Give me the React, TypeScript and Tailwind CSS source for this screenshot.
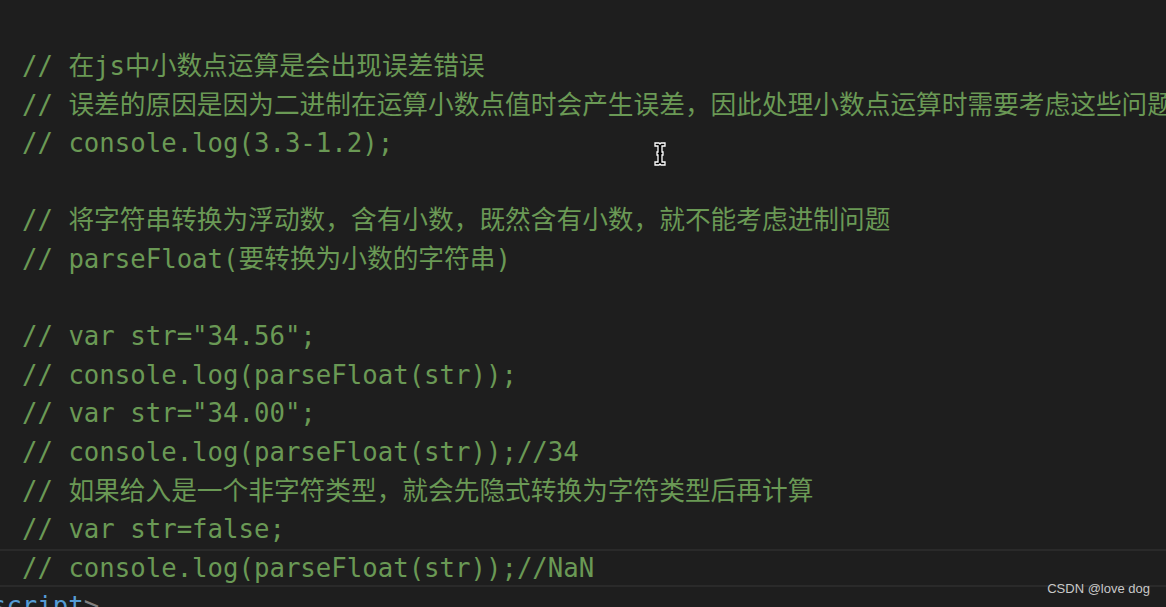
import React from "react";

const lines: string[] = [
  "// 在js中小数点运算是会出现误差错误",
  "// 误差的原因是因为二进制在运算小数点值时会产生误差，因此处理小数点运算时需要考虑这些问题",
  "// console.log(3.3-1.2);",
  "",
  "// 将字符串转换为浮动数，含有小数，既然含有小数，就不能考虑进制问题",
  "// parseFloat(要转换为小数的字符串)",
  "",
  "// var str=\"34.56\";",
  "// console.log(parseFloat(str));",
  "// var str=\"34.00\";",
  "// console.log(parseFloat(str));//34",
  "// 如果给入是一个非字符类型，就会先隐式转换为字符类型后再计算",
  "// var str=false;",
  "// console.log(parseFloat(str));//NaN",
];

export default function App() {
  return (
    <div className="relative w-[1166px] h-[607px] overflow-hidden bg-[#1e1e1e]">
      <div
        className="pt-[47px] whitespace-pre text-[25.7px] leading-[38.6px] text-[#6a9955]"
        style={{ fontFamily: '"DejaVu Sans Mono", "Noto Sans CJK SC", monospace' }}
      >
        {lines.map((l, i) => (
          <div
            key={i}
            className={
              i === 13
                ? "h-[38.6px] pl-[22px] border-y-2 border-[#2a2a2a] leading-[34.6px]"
                : "h-[38.6px] pl-[22px]"
            }
          >
            {l === "" ? "\u00a0" : l}
          </div>
        ))}
        <div className="h-[38.6px] -ml-[40px]">
          <span className="text-[#808080]">&lt;/</span>
          <span className="text-[#569cd6]">script</span>
          <span className="text-[#808080]">&gt;</span>
        </div>
      </div>

      {/* I-beam mouse cursor */}
      <svg
        className="absolute left-[652px] top-[141px]"
        width="16"
        height="26"
        viewBox="0 0 16 26"
      >
        <path
          d="M3 2 H7 L8 3 L9 2 H13 V5 H10 V11 H11 V14 H10 V21 H13 V24 H9 L8 23 L7 24 H3 V21 H6 V14 H5 V11 H6 V5 H3 Z"
          fill="#000"
          stroke="#fff"
          strokeWidth="1.3"
        />
      </svg>

      <div
        className="absolute right-[16px] bottom-[9px] text-[13px] text-[#c8c8c8]"
        style={{ fontFamily: '"Liberation Sans", Arial, sans-serif' }}
      >
        CSDN @love dog
      </div>
    </div>
  );
}
